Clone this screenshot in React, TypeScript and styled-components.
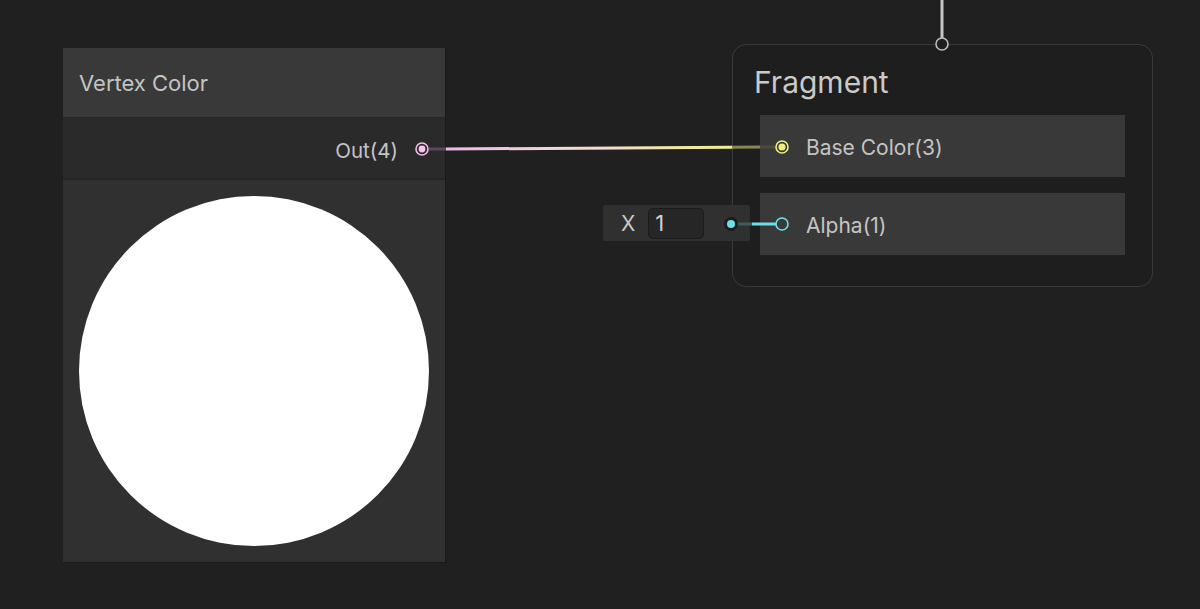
import React from 'react'
import styled, { createGlobalStyle } from 'styled-components'

const Global = createGlobalStyle`
  html, body {
    margin: 0;
    padding: 0;
    background: #202020;
    overflow: hidden;
  }
  body {
    font-family: Inter, "Noto Sans", "DejaVu Sans", sans-serif;
    color: #c4c4c4;
  }
`

const Canvas = styled.div`
  position: relative;
  width: 1200px;
  height: 609px;
  background: #202020;
  overflow: hidden;
`

const Node = styled.div<{ $x: number; $y: number; $w: number }>`
  position: absolute;
  left: ${(p) => p.$x}px;
  top: ${(p) => p.$y}px;
  width: ${(p) => p.$w}px;
  box-sizing: border-box;
  display: flex;
  flex-direction: column;
`

const PreviewNode = styled(Node)`
  background: #303030;
  box-shadow: 1px 1px 0 #1a1a1a;
`

const Header = styled.div`
  height: 69px;
  display: flex;
  align-items: center;
  padding: 0 16px;
  background: #393939;
  border-bottom: 1px solid #262626;
  font-size: 22px;
  color: #c4c4c4;
`

const OutputRow = styled.div`
  height: 62px;
  display: flex;
  align-items: center;
  justify-content: flex-end;
  padding: 4px 47px 0 0;
  box-sizing: border-box;
  background: #2a2a2a;
  border-bottom: 2px solid #252525;
  font-size: 20.5px;
  color: #c4c4c4;
`

const Preview = styled.div`
  height: 381px;
  display: flex;
  align-items: center;
  justify-content: center;
  padding-bottom: 1px;
`

const Sphere = styled.div`
  width: 350px;
  height: 350px;
  border-radius: 50%;
  background: #ffffff;
`

const MasterNode = styled(Node)`
  background: #1e1e1e;
  border: 1px solid #3a3a3a;
  border-radius: 14px;
  padding: 0 27px 31px 27px;
  gap: 16px;
`

const MasterTitle = styled.div`
  height: 54px;
  box-sizing: border-box;
  padding-top: 20px;
  margin-left: -6px;
  display: flex;
  align-items: center;
  font-size: 30px;
  color: #cacaca;
`

const SlotRow = styled.div`
  height: 62px;
  box-sizing: border-box;
  display: flex;
  align-items: center;
  padding: 3px 0 0 46px;
  background: #393939;
  font-size: 21px;
  color: #c4c4c4;
`

const InlineField = styled.div<{ $x: number; $y: number }>`
  position: absolute;
  left: ${(p) => p.$x}px;
  top: ${(p) => p.$y}px;
  width: 147px;
  height: 36px;
  display: flex;
  align-items: center;
  gap: 13px;
  padding-left: 18px;
  box-sizing: border-box;
  background: #303030;
  border-radius: 2px;
  font-size: 21px;
  color: #c8c8c8;
`

const FieldInput = styled.div`
  width: 56px;
  height: 31px;
  box-sizing: border-box;
  display: flex;
  align-items: center;
  padding-left: 6px;
  background: #262626;
  border: 1px solid #1b1b1b;
  border-radius: 5px;
  font-size: 22px;
  color: #d0d0d0;
`

const Wires = styled.svg`
  position: absolute;
  left: 0;
  top: 0;
  pointer-events: none;
`

export default function App() {
  return (
    <Canvas>
      <Global />

      <PreviewNode $x={63} $y={48} $w={382}>
        <Header>Vertex Color</Header>
        <OutputRow>Out(4)</OutputRow>
        <Preview>
          <Sphere />
        </Preview>
      </PreviewNode>

      <MasterNode $x={732} $y={44} $w={421}>
        <MasterTitle>Fragment</MasterTitle>
        <SlotRow>Base Color(3)</SlotRow>
        <SlotRow>Alpha(1)</SlotRow>
      </MasterNode>

      <InlineField $x={603} $y={205}>
        X
        <FieldInput>1</FieldInput>
      </InlineField>

      <Wires width={1200} height={609} viewBox="0 0 1200 609">
        <defs>
          <linearGradient id="edge" x1="446" y1="0" x2="732" y2="0" gradientUnits="userSpaceOnUse">
            <stop offset="0" stopColor="#f2b6ea" />
            <stop offset="0.45" stopColor="#f2dcd6" />
            <stop offset="1" stopColor="#eef08a" />
          </linearGradient>
        </defs>

        {/* top master stack connector */}
        <line x1={942} y1={0} x2={942} y2={38} stroke="#c6c6c6" strokeWidth={3} />
        <circle cx={942} cy={44} r={6} fill="#1e1e1e" stroke="#bdbdbd" strokeWidth={1.6} />

        {/* Out(4) -> Base Color(3) */}
        <line x1={429} y1={149} x2={446} y2={149} stroke="#5a4a56" strokeWidth={3} />
        <line x1={446} y1={149} x2={732} y2={147.3} stroke="url(#edge)" strokeWidth={3} />
        <line x1={732} y1={147.3} x2={760} y2={147} stroke="#878753" strokeWidth={3} />
        <line x1={760} y1={147} x2={776} y2={147} stroke="#4c4c3c" strokeWidth={3} />
        <circle cx={422} cy={149} r={6} fill="#2a2a2a" stroke="#f0bfe9" strokeWidth={1.6} />
        <circle cx={422} cy={149} r={3.4} fill="#f4c4ee" />
        <circle cx={782} cy={147} r={6} fill="#393939" stroke="#eef07a" strokeWidth={1.6} />
        <circle cx={782} cy={147} r={3.6} fill="#eef07a" />

        {/* X field -> Alpha(1) */}
        <line x1={736} y1={224} x2={752} y2={224} stroke="#3f5a5c" strokeWidth={3} />
        <line x1={752} y1={224} x2={776} y2={224} stroke="#6ddfe6" strokeWidth={3} />
        <circle cx={731} cy={224} r={7} fill="#1c1c1c" />
        <circle cx={731} cy={224} r={4} fill="#6ddfe6" />
        <circle cx={782} cy={224} r={6} fill="#393939" stroke="#6ddfe6" strokeWidth={1.6} />
      </Wires>
    </Canvas>
  )
}
